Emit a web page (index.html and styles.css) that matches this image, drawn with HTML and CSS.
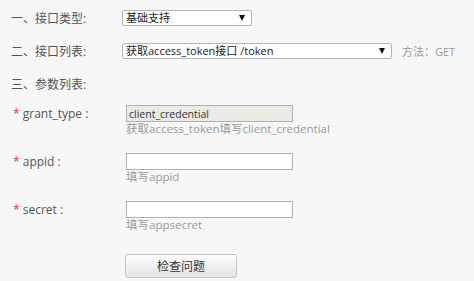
FILE: index.html
```html
<!DOCTYPE html>
<html lang="zh-CN">
<head>
    <meta charset="UTF-8">
    <title>接口调试</title>
    <link rel="stylesheet" href="styles.css">
</head>
<body>
    <form class="debug-form">
        <div class="row">
            <label class="row-label">一、接口类型:</label>
            <div class="select-box type-select">
                <span>基础支持</span>
                <i class="arrow"></i>
            </div>
        </div>
        <div class="row">
            <label class="row-label">二、接口列表:</label>
            <div class="select-box api-select">
                <span>获取access_token接口 /token</span>
                <i class="arrow"></i>
            </div>
            <span class="method">方法：GET</span>
        </div>
        <div class="row">
            <label class="row-label">三、参数列表:</label>
        </div>

        <div class="param">
            <label class="param-label"><em>*</em> grant_type :</label>
            <div class="param-field">
                <input type="text" class="param-input readonly" value="client_credential" readonly>
                <div class="hint">获取access_token填写client_credential</div>
            </div>
        </div>
        <div class="param">
            <label class="param-label"><em>*</em> appid :</label>
            <div class="param-field">
                <input type="text" class="param-input">
                <div class="hint">填写appid</div>
            </div>
        </div>
        <div class="param">
            <label class="param-label"><em>*</em> secret :</label>
            <div class="param-field">
                <input type="text" class="param-input">
                <div class="hint">填写appsecret</div>
            </div>
        </div>

        <div class="actions">
            <button type="button" class="check-btn">检查问题</button>
        </div>
    </form>
</body>
</html>
```

FILE: styles.css
```css
body {
    margin: 0;
    background: #f7f7f7;
    color: #555;
    font-family: "Open Sans", "Noto Sans CJK SC", sans-serif;
    font-size: 12px;
}

.debug-form {
    padding: 1px 0 0 11px;
}

.row {
    display: flex;
    align-items: center;
    height: 33px;
}

.row-label {
    width: 111px;
    flex-shrink: 0;
}

.select-box {
    position: relative;
    height: 16px;
    box-sizing: border-box;
    border: 1px solid #b5b5b5;
    border-radius: 2px;
    background: #fff;
    color: #222;
    padding-left: 3px;
    line-height: 14px;
    font-size: 11px;
}

.type-select {
    width: 130px;
}

.api-select {
    width: 270px;
}

.select-box .arrow {
    position: absolute;
    right: 6px;
    top: 4px;
    width: 0;
    height: 0;
    border-left: 3px solid transparent;
    border-right: 3px solid transparent;
    border-top: 6px solid #111;
}

.method {
    margin-left: 10px;
    color: #999;
    font-size: 11px;
}

.param {
    display: flex;
    align-items: flex-start;
    margin-top: 5px;
    margin-bottom: 17px;
}

.param + .param {
    margin-top: 0;
}

.param-label {
    width: 113px;
    padding-left: 2px;
    line-height: 17px;
    color: #555;
    flex-shrink: 0;
}

.param-label em {
    font-style: normal;
    color: #e0413a;
}

.param-field {
    display: flex;
    flex-direction: column;
}

.param-input {
    width: 167px;
    height: 17px;
    box-sizing: border-box;
    margin: 0;
    padding: 0 2px;
    border: 1px solid #b0b0b0;
    background: #fff;
    font-family: inherit;
    font-size: 10.5px;
    color: #333;
    outline: none;
}

.param-input.readonly {
    background: #ebebe6;
}

.hint {
    color: #999;
    font-size: 11.5px;
    line-height: 14px;
}

.actions {
    padding-left: 114px;
    margin-top: 22px;
}

.check-btn {
    width: 112px;
    height: 24px;
    border: 1px solid #c4c4c4;
    border-radius: 3px;
    background: linear-gradient(#fdfdfd, #e4e4e4);
    font-family: inherit;
    font-size: 12px;
    color: #333;
    padding: 0;
    cursor: pointer;
}
```
